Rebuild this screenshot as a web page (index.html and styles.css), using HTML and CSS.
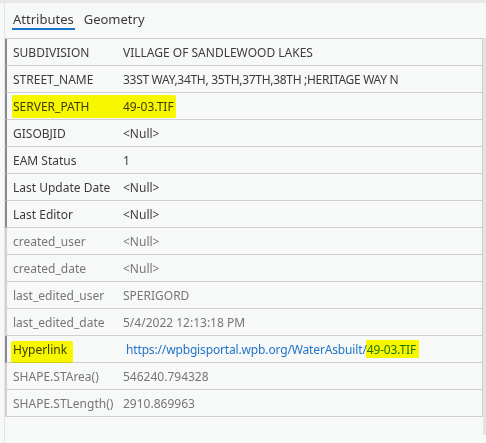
FILE: index.html
```html
<!DOCTYPE html>
<html>
<head>
<meta charset="utf-8">
<link rel="stylesheet" href="styles.css">
</head>
<body>
<div class="topbar"></div>
<div class="panel">
  <div class="tabs">
    <span class="tab active">Attributes</span>
    <span class="tab">Geometry</span>
  </div>
  <div class="body">
    <div class="table">
      <div class="row dark"><span class="k">SUBDIVISION</span><span class="v">VILLAGE OF SANDLEWOOD LAKES</span></div>
      <div class="row dark"><span class="k">STREET_NAME</span><span class="v tight">33ST WAY,34TH, 35TH,37TH,38TH ;HERITAGE WAY N</span></div>
      <div class="row dark"><span class="k">SERVER_PATH</span><span class="v">49-03.TIF</span><span class="hl hl-server"></span></div>
      <div class="row dark"><span class="k">GISOBJID</span><span class="v">&lt;Null&gt;</span></div>
      <div class="row dark"><span class="k">EAM Status</span><span class="v">1</span></div>
      <div class="row dark"><span class="k">Last Update Date</span><span class="v">&lt;Null&gt;</span></div>
      <div class="row dark"><span class="k">Last Editor</span><span class="v">&lt;Null&gt;</span></div>
      <div class="row light"><span class="k">created_user</span><span class="v">&lt;Null&gt;</span></div>
      <div class="row light"><span class="k">created_date</span><span class="v">&lt;Null&gt;</span></div>
      <div class="row light"><span class="k">last_edited_user</span><span class="v">SPERIGORD</span></div>
      <div class="row light"><span class="k">last_edited_date</span><span class="v">5/4/2022 12:13:18 PM</span></div>
      <div class="row dark"><span class="k">Hyperlink</span><span class="v link">https://wpbgisportal.wpb.org/WaterAsbuilt/<span class="mark">49-03.TIF</span></span><span class="hl hl-link1"></span></div>
      <div class="row light"><span class="k">SHAPE.STArea()</span><span class="v">546240.794328</span></div>
      <div class="row light"><span class="k">SHAPE.STLength()</span><span class="v">2910.869963</span></div>
    </div>
    <div class="scroll"></div>
  </div>
</div>
</body>
</html>
```

FILE: styles.css
```css
html, body {
  margin: 0;
  padding: 0;
  background: #f7f8f8;
  font-family: "Noto Sans", "Open Sans", sans-serif;
  width: 486px;
  height: 443px;
  overflow: hidden;
}
.topbar {
  height: 3px;
  background: #e8e8e8;
}
.panel {
  margin-left: 4px;
  border-left: 1px solid #e4e4e4;
  height: 440px;
  box-sizing: border-box;
}
.tabs {
  display: flex;
  gap: 8px;
  padding: 8px 0 0 7px;
  height: 35px;
  box-sizing: border-box;
}
.tab {
  font-size: 13px;
  line-height: 17px;
  color: #3a3a3a;
  padding: 0 1px 0 1px;
  height: 17px;
  border-bottom: 2px solid transparent;
}
.tab.active {
  border-bottom-color: #1874c8;
}
.body {
  display: flex;
  align-items: flex-start;
}
.table {
  width: 477px;
  border-top: 1px solid #cfcfcf;
  border-right: 1px solid #cfcfcf;
}
.scroll {
  width: 3px;
  height: 397px;
  background: #e3e3e3;
}
.row {
  position: relative;
  display: flex;
  align-items: center;
  height: 26px;
  border-bottom: 1px solid #cfcfcf;
  border-left: 2px solid #8a8a8a;
  font-size: 12px;
  color: #3c3c3c;
}
.row.light {
  border-left-color: #d2d2d2;
  color: #767676;
}
.k {
  width: 110px;
  padding-left: 6px;
  white-space: nowrap;
}
.v {
  white-space: nowrap;
}
.v.tight {
  letter-spacing: -0.3px;
}
.v.link {
  padding-left: 3px;
  color: #1f74c9;
  letter-spacing: -0.15px;
}
.mark {
  position: relative;
}
.mark::after {
  content: "";
  position: absolute;
  left: -1px;
  right: -3px;
  top: -1px;
  bottom: 0;
  background: #ffff00;
  mix-blend-mode: multiply;
}
.hl {
  position: absolute;
  background: #ffff00;
  mix-blend-mode: multiply;
  border-radius: 2px;
}
.hl-server {
  left: 5px;
  top: 2px;
  width: 164px;
  height: 23px;
}
.hl-link1 {
  left: 4px;
  top: 5px;
  width: 62px;
  height: 22px;
}
```
